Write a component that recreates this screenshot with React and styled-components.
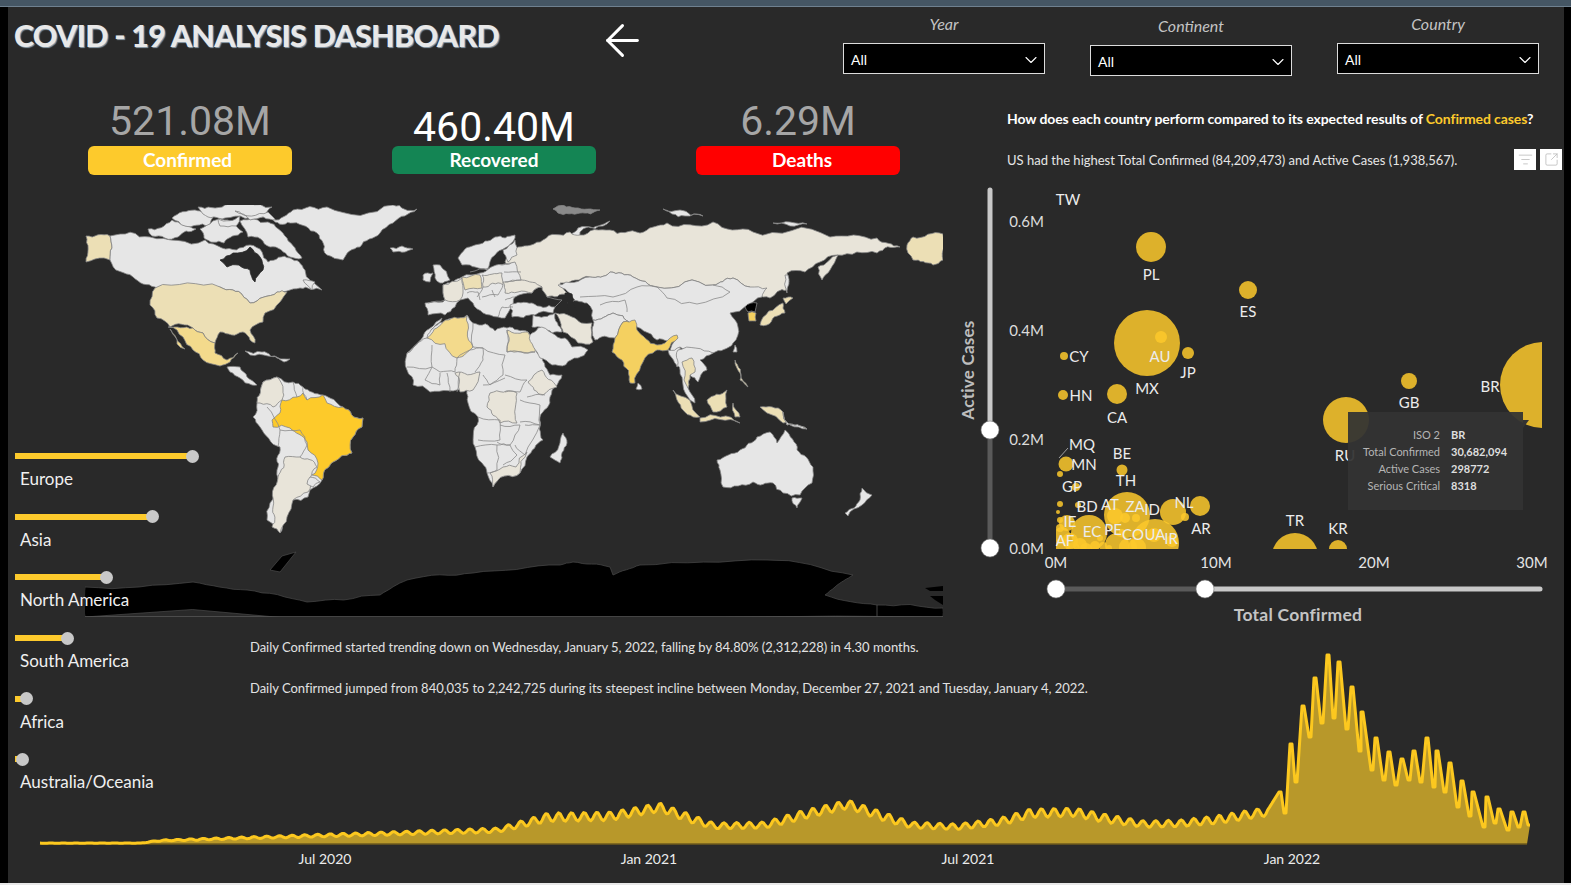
import React from 'react';
import styled, { createGlobalStyle } from 'styled-components';
import { ArrowLeft, ChevronDown, ListFilter, SquareArrowOutUpRight } from 'lucide-react';

const UI_FONT = `"Lato", "Open Sans", "Liberation Sans", sans-serif`;

const GlobalStyle = createGlobalStyle`
    html, body {
        margin: 0;
        height: 100%;
        background: #000;
        overflow: hidden;
    }
    body {
        font-family: ${UI_FONT};
    }
`;

const Page = styled.div`
    width: 1571px;
    height: 885px;
    display: flex;
    flex-direction: column;
    background: #000;
`;

const WindowBar = styled.div`
    height: 6px;
    flex: none;
    background: #455664;
    border-bottom: 1px solid #6f8190;
`;

const CanvasRow = styled.div`
    flex: 1;
    display: flex;
    padding: 0 7px 0 8px;
    min-height: 0;
`;

const Canvas = styled.main`
    position: relative;
    flex: 1;
    display: flex;
    flex-direction: column;
    background: #292929;
    color: #fff;
`;

const BottomEdge = styled.div`
    height: 2px;
    flex: none;
    background: #e8e8e8;
`;

/* header */
const Header = styled.header`
    height: 93px;
    flex: none;
    display: flex;
    padding-left: 6px;
`;

const Title = styled.h1`
    width: 577px;
    margin: 12px 0 0;
    font-family: ${UI_FONT};
    font-size: 30.5px;
    font-weight: 900;
    line-height: 32px;
    letter-spacing: -0.75px;
    white-space: nowrap;
    color: #e8e8e8;
    text-shadow: 1px 1px 1px #8fa0ad;
`;

const BackButton = styled.button`
    width: 51px;
    height: 51px;
    margin: 8px 0 0 6px;
    padding: 0;
    border: 0;
    background: none;
    color: #fff;
`;

const Filters = styled.div`
    display: flex;
    gap: 45px;
    margin-left: auto;
    padding-right: 25px;
`;

const Filter = styled.div`
    width: 202px;
    display: flex;
    flex-direction: column;
    align-items: center;
    margin-top: ${p => p.$drop ? 2 : 0}px;
`;

const FilterLabel = styled.span`
    height: 36px;
    line-height: 34px;
    font-size: 16px;
    font-style: italic;
    color: #c4c4c4;
`;

const Select = styled.div`
    box-sizing: border-box;
    width: 100%;
    height: 31px;
    display: flex;
    align-items: center;
    justify-content: space-between;
    padding: 2px 3px 0 7px;
    background: #000;
    border: 1.5px solid #dcdcdc;
    font-size: 14px;
    color: #fff;
`;

/* middle */
const Middle = styled.section`
    height: 527px;
    flex: none;
    display: flex;
`;

const LeftColumn = styled.div`
    width: 942px;
    flex: none;
    display: flex;
    flex-direction: column;
`;

const KpiRow = styled.div`
    display: flex;
    gap: 100px;
    padding-left: 80px;
`;

const Kpi = styled.div`
    width: 204px;
    display: flex;
    flex-direction: column;
    align-items: center;
`;

const KpiValue = styled.div`
    box-sizing: border-box;
    height: 46px;
    padding-top: ${p => p.$low ? 8 : 0}px;
    font-family: "Roboto", sans-serif;
    font-size: 41px;
    line-height: ${p => p.$low ? 38 : 42}px;
    letter-spacing: 0;
    color: ${p => p.$bright ? '#fff' : '#a6a6a6'};
`;

const KpiPill = styled.div`
    box-sizing: border-box;
    width: 100%;
    height: ${p => p.$short ? 28 : 29}px;
    padding-left: ${p => p.$shift > 0 ? p.$shift * 2 : 0}px;
    padding-right: ${p => p.$shift < 0 ? -p.$shift * 2 : 0}px;
    line-height: 28px;
    border-radius: 6px;
    text-align: center;
    font-size: 19px;
    font-weight: 700;
    color: #fff;
    background: ${p => p.$color};
`;

const MapFrame = styled.svg`
    display: block;
    width: 858px;
    height: 412px;
    margin: 30px 0 0 77px;
`;

const RightColumn = styled.div`
    flex: 1;
    display: flex;
    flex-direction: column;
    min-width: 0;
`;

const Insight = styled.div`
    display: flex;
    align-items: center;
    justify-content: space-between;
    height: ${p => p.$h}px;
    padding-left: 57px;
    padding-right: 2px;
    font-size: 13px;
    color: #e6e6e6;
`;

const Question = styled.span`
    font-size: 14px;
    font-weight: 700;
    color: #fff;
    letter-spacing: -0.1px;
`;

const Accent = styled.span`
    color: #fdca2c;
`;

const VisualIcons = styled.div`
    display: flex;
    gap: 4px;
`;

const VisualIcon = styled.span`
    width: 22px;
    height: 21px;
    display: flex;
    align-items: center;
    justify-content: center;
    background: #fff;
    color: #b5b5b5;
`;

const ScatterPanel = styled.div`
    position: relative;
    height: 445px;
    margin-top: -1px;
`;

const ScatterSvg = styled.svg`
    display: block;
    width: 614px;
    height: 445px;
`;

const Tooltip = styled.div`
    position: absolute;
    left: 398px;
    top: 230px;
    box-sizing: border-box;
    width: 175px;
    height: 98px;
    padding-top: 14px;
    background: rgba(51, 51, 51, 0.94);
    display: grid;
    grid-template-columns: 92px auto;
    grid-auto-rows: 17px;
    column-gap: 11px;
    font-size: 11px;
    line-height: 17px;

    &::after {
        content: '';
        position: absolute;
        right: -6px;
        top: 8px;
        border-top: 8px solid #333;
        border-right: 6px solid transparent;
    }
`;

const TipLabel = styled.span`
    text-align: right;
    color: #b5b5b5;
    white-space: nowrap;
`;

const TipValue = styled.span`
    font-weight: 700;
    color: #dedede;
`;

/* continent sliders */
const Continents = styled.div`
    position: absolute;
    left: 7px;
    top: 443px;
    display: flex;
    flex-direction: column;
`;

const Continent = styled.div`
    height: 60.7px;
`;

const ContinentBar = styled.div`
    position: relative;
    height: 6px;
    margin-top: 3px;
    background: #fdca2c;
`;

const ContinentKnob = styled.span`
    position: absolute;
    right: -6.5px;
    top: -3.5px;
    width: 13px;
    height: 13px;
    border-radius: 50%;
    background: #c8c8c8;
`;

const ContinentName = styled.div`
    margin: 9px 0 0 5px;
    font-size: 17px;
    line-height: 22px;
    color: #f0f0f0;
    white-space: nowrap;
`;

/* bottom */
const Trend = styled.section`
    flex: 1;
    display: grid;
`;

const TrendNotes = styled.div`
    grid-area: 1 / 1;
    z-index: 1;
    display: flex;
    flex-direction: column;
    gap: 23px;
    padding: 11px 0 0 242px;
    font-size: 13px;
    line-height: 18px;
    letter-spacing: -0.03px;
    color: #e2e2e2;
`;

const TrendSvg = styled.svg`
    grid-area: 1 / 1;
    display: block;
    width: 1556px;
    height: 256px;
`;

const ChartText = styled.text`
    font-family: ${UI_FONT};
    font-size: ${p => p.$size || 15}px;
    font-weight: ${p => p.$bold ? 700 : 400};
    letter-spacing: ${p => p.$bold ? 0.25 : 0}px;
    fill: ${p => p.$color || '#ececec'};
    text-anchor: ${p => p.$anchor || 'middle'};
    dominant-baseline: central;
`;

const KPIS = [
    { value: '521.08M', label: 'Confirmed', color: '#fdca2c', shift: -2.5 },
    { value: '460.40M', label: 'Recovered', color: '#148554', bright: true, low: true, short: true },
    { value: '6.29M', label: 'Deaths', color: '#ff0000', shift: 4 },
];

const FILTERS = [
    { label: 'Year' },
    { label: 'Continent', drop: true },
    { label: 'Country' },
];

const CONTINENTS = [
    { name: 'Europe', width: 177 },
    { name: 'Asia', width: 137 },
    { name: 'North America', width: 91 },
    { name: 'South America', width: 52 },
    { name: 'Africa', width: 11 },
    { name: 'Australia/Oceania', width: 7 },
];

// map colours
const GREY = '#e6e6e6';
const PALE = '#e8e4d9';
const SAND = '#ecdfb5';
const WARM = '#f3da8c';
const HOT = '#f4d060';
const GOLD = '#fdca2a';
const BG = '#292929';

// outlines are in page pixels, the svg viewBox starts at the map's own corner
const LAND = [
    [SAND, '86,236 110,236 110,260 104,258 95,259 86,262'],
    [GREY, '110,236 150,237 205,240 222,248 250,245 262,252 268,262 290,258 305,270 322,290 300,288 287,291 277,292 250,303 233,290 220,287 155,287 133,277 110,260'],
    [BG, '220,260 233,253 250,247 260,257 263,270 255,282 250,270 227,267'],
    [GREY, '148,229 172,220 196,229 178,237 152,236'],
    [GREY, '172,218 195,210 214,214 208,226 185,226'],
    [GREY, '200,229 228,220 243,232 224,243 204,238'],
    [GREY, '198,207 225,205 272,207 265,216 225,218 203,214'],
    [GREY, '240,221 268,222 287,238 302,258 290,257 270,247 248,237'],
    [GREY, '218,219 240,216 236,226 220,226'],
    [GREY, '235,211 268,212 276,221 250,220'],
    [GREY, '303,280 315,282 312,290'],
    [GREY, '273,220 293,210 327,207 393,205 417,209 393,223 380,233 360,247 343,260 327,255 317,233 293,223'],
    [GREY, '390,248 402,246 413,249 405,252 393,252'],
    ['#8a8a8a', '553,209 575,208 600,210 580,213 558,213'],
    [GREY, '663,209 680,210 703,216 685,216 672,214'],
    [GREY, '773,223 790,222 807,224 790,226'],
    [GREY, '570,235 578,228 610,221 598,226 580,232 578,238'],
    [SAND, '155,288 220,287 233,290 250,303 277,292 287,292 280,302 265,313 263,322 250,330 255,343 250,340 243,332 220,332 215,343 203,333 193,328 170,327 157,318 150,305'],
    [WARM, '168,327 193,328 203,333 215,343 215,353 227,360 238,353 230,362 220,366 203,360 193,350 183,337 177,330'],
    [WARM, '170,329 176,338 185,349 177,344'],
    [GREY, '227,367 240,367 247,377 257,385 252,385 240,378 230,372'],
    [GREY, '245,351 262,352 280,359 268,356 250,355'],
    [GREY, '278,358 290,359 284,362'],
    [GREY, '263,382 277,377 293,382 303,387 323,395 343,407 363,418 362,427 353,437 352,453 333,462 322,480 310,490 308,497 293,500 287,513 280,533 267,520 270,503 277,470 280,447 260,427 253,417 257,403'],
    [PALE, '263,382 277,377 283,390 282,400 273,407 260,403 257,403'],
    [GOLD, '272,420 280,413 282,400 297,397 303,393 307,400 323,395 327,403 343,407 363,418 362,427 353,437 352,453 333,462 322,480 312,475 318,463 308,450 307,442 290,428 273,427'],
    [PALE, '285,457 300,457 317,467 310,478 308,492 293,500 287,517 280,533 272,527 273,507 278,477'],
    [GREY, '310,477 320,482 313,487 307,484'],
    [GREY, '407,353 423,337 443,322 467,315 473,323 495,331 507,328 528,332 537,353 550,375 562,375 550,397 540,417 543,440 527,457 520,473 493,487 487,473 482,463 475,447 478,417 468,403 467,390 430,392 413,385 407,370'],
    [GREY, '407,353 423,337 436,322 442,318 427,338'],
    [WARM, '427,338 443,322 467,316 473,347 457,358'],
    [SAND, '507,330 528,332 535,352 507,352'],
    [PALE, '455,373 480,372 473,390 460,392'],
    [PALE, '528,382 542,370 557,387 543,395'],
    [PALE, '490,393 517,393 517,423 500,423 487,407'],
    [PALE, '490,473 503,467 516,467 527,452 520,473 493,487'],
    [GREY, '550,457 563,433 567,443 560,463'],
    [GREY, '458,258 475,245 495,237 515,235 515,238 505,248 495,255 487,270 475,267 470,265 462,265'],
    [PALE, '518,247 543,240 570,232 580,235 610,230 640,233 667,223 713,222 753,232 830,237 877,238 900,247 877,253 837,255 820,262 805,272 787,273 787,290 770,298 763,297 750,287 733,278 713,285 657,287 633,277 610,272 590,277 560,283 567,293 547,297 542,287 520,280 512,272 505,262 510,255'],
    [PALE, '818,267 838,255 830,270 822,280'],
    [SAND, '907,245 913,237 943,234 943,260 933,265 913,260 908,253'],
    [GREY, '503,250 515,240 517,255 508,262'],
    [GREY, '498,265 515,263 513,270 502,272'],
    [GREY, '433,265 440,265 450,280 440,283 435,278'],
    [GREY, '423,275 433,273 430,282 423,280'],
    // mainland Europe under the single countries
    [GREY, '443,285 462,277 480,273 502,265 515,262 521,280 542,287 532,293 515,297 513,307 505,318 498,317 490,315 483,313 473,303 468,298 460,300 455,307 445,315 428,315 425,303 443,302 445,300'],
    [PALE, '443,285 462,278 463,293 460,300 445,300'],
    [SAND, '462,277 480,275 482,288 465,290'],
    [PALE, '482,275 502,273 503,285 483,287'],
    [PALE, '503,282 522,280 542,287 532,293 518,292 505,293'],
    [GREY, '510,305 532,303 555,307 553,313 535,315 512,317'],
    [GREY, '533,315 555,313 562,332 552,333 532,327'],
    [GREY, '530,335 538,328 552,333 565,338 572,347 588,350 578,358 552,365 540,358'],
    [PALE, '555,313 572,317 592,323 593,342 578,343 563,332'],
    [GREY, '558,285 590,277 610,272 633,277 657,287 713,285 733,278 750,287 767,288 762,297 747,305 730,313 738,327 733,343 713,353 680,347 677,363 670,353 677,337 657,340 630,323 613,313 593,320 587,303 567,303 575,300'],
    [BG, '565,293 572,294 574,305 577,314 570,314 567,305'],
    [GREY, '593,320 613,313 630,323 623,322 615,338 595,340'],
    [HOT, '623,322 635,320 637,330 657,345 665,343 677,335 678,338 668,350 657,350 653,353 635,383 630,383 622,360 612,352 615,338'],
    [GREY, '638,383 642,389 636,389'],
    [GREY, '668,350 680,347 682,363 677,367 672,358'],
    [GREY, '678,350 713,353 700,360 707,370 698,382 690,375 688,388 695,403 690,400 683,385 680,370'],
    [SAND, '682,362 692,358 695,372 690,375 688,388 684,380'],
    [SAND, '673,390 700,417 693,417 677,400'],
    [SAND, '700,418 740,423 700,422'],
    [SAND, '707,400 727,390 727,407 713,412'],
    [SAND, '733,403 740,417 735,417'],
    [SAND, '735,360 748,387 740,380'],
    [SAND, '760,407 783,412 787,425 807,429 783,423 767,413'],
    [GREY, '783,412 790,425 807,429 787,425'],
    [SAND, '760,325 783,303 785,313 767,325'],
    [SAND, '783,298 793,298 786,304'],
    [GREY, '785,275 788,275 787,293'],
    [HOT, '748,313 756,313 756,321 749,321'],
    ['#000', '745,307 757,303 755,312 748,312'],
    [GREY, '735,345 733,352 737,352'],
    [GREY, '717,460 740,450 757,437 770,432 777,443 785,430 797,450 813,467 812,483 800,495 783,493 773,483 753,482 723,487 720,470'],
    [GREY, '792,498 802,498 797,508'],
    [GREY, '845,513 860,500 862,488 872,495 862,505 848,516'],
];

const ANTARCTICA = '85,617 85,587 193,582 247,590 307,602 380,595 407,580 473,573 560,565 573,562 610,567 613,575 640,565 767,560 853,575 835,587 825,595 877,605 943,608 943,617';

const BORDERS = [
    '432,345 432,367 407,367', '432,367 440,372 455,372 457,358', '457,358 470,350 483,348 483,360 475,372',
    '483,348 505,355 503,375 490,385 483,375', '473,323 473,347 483,348', '507,352 507,330',
    '507,352 535,352', '505,375 527,380 520,392 505,392', '483,385 505,378', '432,367 425,380 440,385 440,373',
    '447,373 450,392', '460,372 457,392', '478,417 500,420 500,440 478,440', '500,425 520,425 510,445 497,442',
    '520,400 540,405 540,425 520,422', '527,397 545,395', '525,425 540,425 525,455 515,445',
    '475,447 497,445 497,470 487,473', '497,445 510,445 517,455 503,465',
    '657,287 667,298 697,304 730,292 713,285', '580,297 613,297 637,287 657,287', '600,305 625,300 627,312',
    '267,407 280,430 278,447', '280,430 300,430 307,445 300,457', '293,382 297,397', '303,387 307,400',
    '470,272 490,268', '498,295 503,285', '492,290 495,297', '505,300 515,297', '505,282 521,280', '504,272 521,272',
    '482,297 498,295', '483,287 477,297', '467,293 478,292 480,300', '445,300 428,303', '498,317 502,307 513,307',
    '555,307 562,300 547,297',
];

const BUBBLES = [
    [1151, 247, 15], [1248, 290, 9], [1147, 343, 33], [1161, 337, 6], [1188, 353, 6], [1064, 356, 4],
    [1063, 395, 5], [1117, 394, 10], [1409, 381, 8], [1543, 385, 43], [1346, 420, 23], [1295, 556, 23],
    [1338, 549, 9], [1066, 464, 7.5], [1060, 474, 3], [1122, 470, 5.5], [1076, 487, 4], [1060, 504, 3],
    [1058, 512, 2], [1060, 520, 3], [1078, 505, 3], [1127, 515, 23], [1173, 512, 13], [1200, 506, 10],
    [1155, 543, 24], [1185, 517, 4], [1089, 533, 18], [1067, 523, 8], [1128, 547, 9], [1117, 545, 12],
    [1137, 547, 9], [1115, 516, 8], [1125, 518, 5], [1136, 518, 4], [1154, 535, 7], [1172, 541, 6],
    [1062, 535, 8], [1070, 541, 8], [1080, 545, 7], [1062, 546, 8], [1073, 549, 7], [1086, 549, 6],
    [1095, 546, 5], [1103, 546, 4], [1060, 528, 4], [1109, 548, 3], [1100, 538, 3], [1122, 532, 3],
];

const LABELS = [
    ['TW', 1068, 199], ['PL', 1151, 274], ['ES', 1248, 311], ['CY', 1079, 356], ['AU', 1160, 356], ['JP', 1188, 372],
    ['MX', 1147, 388], ['HN', 1081, 395], ['CA', 1117, 417], ['BR', 1490, 386], ['GB', 1409, 402], ['RU', 1345, 455],
    ['MQ', 1082, 444], ['MN', 1084, 464], ['BE', 1122, 453], ['TH', 1126, 480], ['GP', 1072, 486], ['BD', 1087, 506],
    ['AT', 1110, 504], ['ZA', 1135, 506], ['ID', 1152, 509], ['NL', 1184, 502], ['AR', 1201, 528], ['IE', 1070, 521],
    ['EC', 1092, 531], ['PE', 1113, 529], ['CO', 1133, 534], ['UA', 1155, 534], ['IR', 1171, 538], ['AF', 1065, 540],
    ['TR', 1295, 520], ['KR', 1338, 528],
];

const Y_TICKS = [['0.6M', 221], ['0.4M', 330], ['0.2M', 439], ['0.0M', 548]];
const X_TICKS = [['0M', 1056], ['10M', 1216], ['20M', 1374], ['30M', 1532]];

// top of the curve up to Dec 2021, the weekly ripple is added on top of it
const ENVELOPE = [
    [40, 843], [140, 843], [160, 840], [325, 834], [497, 828], [548, 813], [610, 812], [660, 803], [714, 823],
    [765, 822], [797, 812], [848, 800], [912, 822], [957, 824], [1000, 818], [1030, 809], [1075, 808],
    [1110, 815], [1145, 821], [1180, 820], [1215, 816], [1250, 810], [1271, 807],
];

// peaks and dips of the 2022 wave, read off the screenshot
const WAVE = [
    [1280, 792], [1285, 813], [1291, 744], [1296, 782], [1303, 706], [1310, 737], [1315, 678], [1322, 723],
    [1328, 655], [1334, 718], [1339, 662], [1347, 729], [1352, 687], [1360, 751], [1362, 712], [1372, 770],
    [1376, 738], [1384, 780], [1389, 752], [1396, 785], [1402, 759], [1409, 780], [1414, 751], [1421, 782],
    [1427, 738], [1434, 787], [1437, 751], [1445, 792], [1450, 763], [1458, 807], [1462, 781], [1470, 816],
    [1473, 792], [1484, 827], [1487, 797], [1495, 823], [1499, 809], [1508, 830], [1512, 812], [1519, 827],
    [1524, 812], [1529, 825],
];

const envelopeAt = (x) => {
    const i = ENVELOPE.findIndex(p => p[0] >= x);
    if (i <= 0) return ENVELOPE[0][1];
    const [x0, y0] = ENVELOPE[i - 1];
    const [x1, y1] = ENVELOPE[i];
    return y0 + (y1 - y0) * (x - x0) / (x1 - x0);
};

const buildCurve = () => {
    const points = [];
    for (let x = 40; x < 1270; x += 1.8) {
        const top = envelopeAt(x);
        const ripple = Math.min(8.5, (844 - top) * 0.28);
        const phase = Math.cos((x / 12.7) * Math.PI * 2);
        points.push([x, top + ripple * (0.5 - 0.5 * phase)]);
    }
    // each extreme of the wave gets a short flat step
    WAVE.forEach(([x, y]) => {
        points.push([x - 1, y], [x + 1, y]);
    });
    return points;
};

const CURVE = buildCurve();
const CURVE_LINE = CURVE.map(p => `${p[0].toFixed(1)},${p[1].toFixed(1)}`).join(' ');

// coastlines: split every edge and push the midpoint sideways, same result for an edge two countries share
const noise = (a, b) => {
    const s = Math.sin(a * 12.9898 + b * 78.233) * 43758.5453;
    return s - Math.floor(s);
};

const splitEdge = (p, q, amount, depth) => {
    const len = Math.hypot(q[0] - p[0], q[1] - p[1]);
    if (depth === 0 || len < 5) return [];
    const flip = p[0] > q[0] || (p[0] === q[0] && p[1] > q[1]);
    const [a, b] = flip ? [q, p] : [p, q];
    const off = (noise(a[0] + b[1], a[1] + b[0]) - 0.5) * len * amount;
    const mid = [
        (a[0] + b[0]) / 2 - ((b[1] - a[1]) / len) * off,
        (a[1] + b[1]) / 2 + ((b[0] - a[0]) / len) * off,
    ];
    return [...splitEdge(p, mid, amount, depth - 1), mid, ...splitEdge(mid, q, amount, depth - 1)];
};

const roughen = (points, { closed = true, amount = 0.3, depth = 3 } = {}) => {
    const list = points.split(' ').map(s => s.split(',').map(Number));
    const out = [];
    list.forEach((p, i) => {
        out.push(p);
        const q = list[i + 1] || (closed ? list[0] : null);
        if (q) out.push(...splitEdge(p, q, amount, depth));
    });
    return out.map(p => `${p[0].toFixed(1)},${p[1].toFixed(1)}`).join(' ');
};

const LAND_SHAPES = LAND.map(([fill, points]) => [fill, roughen(points)]);
const BORDER_LINES = BORDERS.map(points => roughen(points, { closed: false, amount: 0.2, depth: 2 }));
const ANTARCTIC_TOP = roughen(ANTARCTICA, { amount: 0.08, depth: 3 });

const WorldMap = () => (
    <MapFrame viewBox="85 205 858 412">
        <polygon points={ANTARCTIC_TOP} fill="#000" stroke="#4a4a4a" strokeWidth="0.7" />
        <polygon points="270,570 282,556 296,552 288,562 280,572" fill="#000" stroke="#4a4a4a" strokeWidth="0.7" />
        <polyline points="877,605 877,617" fill="none" stroke="#555" strokeWidth="0.8" />
        <polyline points="85,616.5 943,616.5" fill="none" stroke="#555" strokeWidth="0.8" />
        <polygon points="925,588 943,586 943,591 930,591" fill="#000" />
        <polygon points="930,596 943,596 943,605 935,600" fill="#000" />
        {LAND_SHAPES.map(([fill, points], i) => (
            <polygon key={i} points={points} fill={fill} stroke={fill === BG ? BG : '#858585'} strokeWidth="0.8" strokeLinejoin="round" />
        ))}
        {BORDER_LINES.map((points, i) => (
            <polyline key={i} points={points} fill="none" stroke="#8a8a8a" strokeWidth="0.8" />
        ))}
    </MapFrame>
);

const ScatterChart = () => (
    <ScatterSvg viewBox="950 182 614 445">
        <defs>
            <clipPath id="plot">
                <rect x="1056" y="185" width="486" height="364" />
            </clipPath>
        </defs>
        <g clipPath="url(#plot)">
            {BUBBLES.map(([cx, cy, r], i) => (
                <circle key={i} cx={cx} cy={cy} r={r} fill="#fdc92c" fillOpacity="0.85" />
            ))}
        </g>
        <line x1="1068" y1="448" x2="1059" y2="458" stroke="#bdbdbd" strokeWidth="0.8" />
        {LABELS.map(([name, x, y]) => (
            <ChartText key={name} x={x} y={y}>{name}</ChartText>
        ))}
        {Y_TICKS.map(([t, y]) => (
            <ChartText key={t} x={1044} y={y} $anchor="end" $color="#dcdcdc">{t}</ChartText>
        ))}
        {X_TICKS.map(([t, x]) => (
            <ChartText key={t} x={x} y={562} $color="#e4e4e4">{t}</ChartText>
        ))}
        <ChartText x={967} y={370} $bold $size={17} $color="#bdbdbd" transform="rotate(-90 967 370)">Active Cases</ChartText>
        <ChartText x={1298} y={614} $bold $size={17.5} $color="#c4c4c4">Total Confirmed</ChartText>

        {/* axis range sliders */}
        <line x1="990" y1="190" x2="990" y2="430" stroke="#c8c8c8" strokeWidth="5" strokeLinecap="round" />
        <line x1="990" y1="430" x2="990" y2="548" stroke="#5a5a5a" strokeWidth="5" />
        <circle cx="990" cy="430" r="9" fill="#fff" stroke="#777" strokeWidth="0.6" />
        <circle cx="990" cy="548" r="9" fill="#fff" stroke="#777" strokeWidth="0.6" />
        <line x1="1056" y1="589" x2="1205" y2="589" stroke="#5a5a5a" strokeWidth="5" />
        <line x1="1205" y1="589" x2="1540" y2="589" stroke="#c8c8c8" strokeWidth="5" strokeLinecap="round" />
        <circle cx="1056" cy="589" r="9" fill="#fff" stroke="#777" strokeWidth="0.6" />
        <circle cx="1205" cy="589" r="9" fill="#fff" stroke="#777" strokeWidth="0.6" />
    </ScatterSvg>
);

const TrendChart = () => (
    <TrendSvg viewBox="8 627 1556 256">
        <polygon points={`40,844 ${CURVE_LINE} 1527,844`} fill="#b8982a" />
        <line x1="40" y1="844" x2="1527" y2="844" stroke="#6e5a1c" strokeWidth="1.5" />
        <polyline points={CURVE_LINE} fill="none" stroke="#fcc81f" strokeWidth="3" strokeLinejoin="round" />
        <ChartText x={325} y={858} $size={14}>Jul 2020</ChartText>
        <ChartText x={649} y={858} $size={14}>Jan 2021</ChartText>
        <ChartText x={968} y={858} $size={14}>Jul 2021</ChartText>
        <ChartText x={1292} y={858} $size={14}>Jan 2022</ChartText>
    </TrendSvg>
);

export default function App() {
    return (
        <Page>
            <GlobalStyle />
            <WindowBar />
            <CanvasRow>
                <Canvas>
                    <Header>
                        <Title>COVID - 19 ANALYSIS DASHBOARD</Title>
                        <BackButton aria-label="Back">
                            <ArrowLeft size={51} strokeWidth={1.4} />
                        </BackButton>
                        <Filters>
                            {FILTERS.map(f => (
                                <Filter key={f.label} $drop={f.drop}>
                                    <FilterLabel>{f.label}</FilterLabel>
                                    <Select>
                                        All
                                        <ChevronDown size={20} strokeWidth={1.3} />
                                    </Select>
                                </Filter>
                            ))}
                        </Filters>
                    </Header>

                    <Middle>
                        <LeftColumn>
                            <KpiRow>
                                {KPIS.map(k => (
                                    <Kpi key={k.label}>
                                        <KpiValue $bright={k.bright} $low={k.low}>{k.value}</KpiValue>
                                        <KpiPill $color={k.color} $short={k.short} $shift={k.shift}>{k.label}</KpiPill>
                                    </Kpi>
                                ))}
                            </KpiRow>
                            <WorldMap />
                        </LeftColumn>
                        <RightColumn>
                            <Insight $h={36}>
                                <Question>
                                    How does each country perform compared to its expected results of <Accent>Confirmed cases</Accent>?
                                </Question>
                            </Insight>
                            <Insight $h={47}>
                                <span>US had the highest Total Confirmed (84,209,473) and Active Cases (1,938,567).</span>
                                <VisualIcons>
                                    <VisualIcon><ListFilter size={15} strokeWidth={1.2} /></VisualIcon>
                                    <VisualIcon><SquareArrowOutUpRight size={15} strokeWidth={1.2} /></VisualIcon>
                                </VisualIcons>
                            </Insight>
                            <ScatterPanel>
                                <ScatterChart />
                                <Tooltip>
                                    <TipLabel>ISO 2</TipLabel><TipValue>BR</TipValue>
                                    <TipLabel>Total Confirmed</TipLabel><TipValue>30,682,094</TipValue>
                                    <TipLabel>Active Cases</TipLabel><TipValue>298772</TipValue>
                                    <TipLabel>Serious Critical</TipLabel><TipValue>8318</TipValue>
                                </Tooltip>
                            </ScatterPanel>
                        </RightColumn>
                    </Middle>

                    <Trend>
                        <TrendChart />
                        <TrendNotes>
                            <span>Daily Confirmed started trending down on Wednesday, January 5, 2022, falling by 84.80% (2,312,228) in 4.30 months.</span>
                            <span>Daily Confirmed jumped from 840,035 to 2,242,725 during its steepest incline between Monday, December 27, 2021 and Tuesday, January 4, 2022.</span>
                        </TrendNotes>
                    </Trend>

                    <Continents>
                        {CONTINENTS.map(c => (
                            <Continent key={c.name}>
                                <ContinentBar style={{ width: c.width }}>
                                    <ContinentKnob />
                                </ContinentBar>
                                <ContinentName>{c.name}</ContinentName>
                            </Continent>
                        ))}
                    </Continents>
                </Canvas>
            </CanvasRow>
            <BottomEdge />
        </Page>
    );
}
